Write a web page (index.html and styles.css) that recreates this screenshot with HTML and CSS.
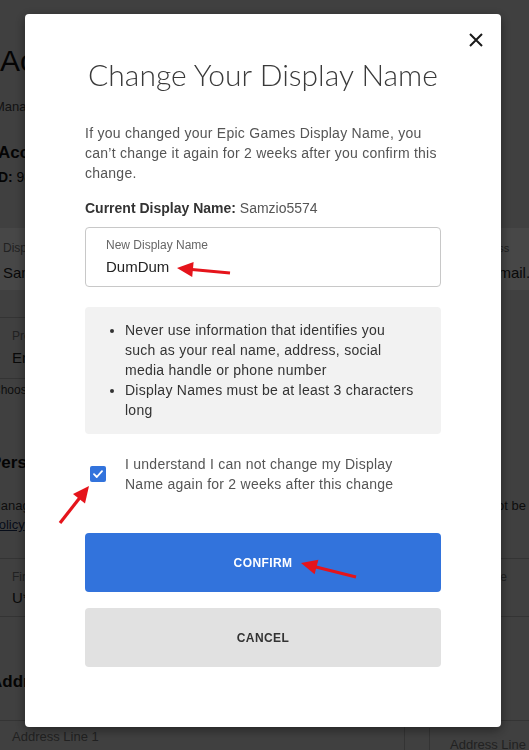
FILE: index.html
```html
<!DOCTYPE html>
<html lang="en">
<head>
    <meta charset="UTF-8">
    <meta name="viewport" content="width=device-width, initial-scale=1.0">
    <title>Account - Change Display Name</title>
    <link rel="stylesheet" href="styles.css">
</head>
<body>
    <div class="page">
        <h1 class="page-title">Account Settings</h1>
        <p class="page-sub">Manage your account’s details.</p>
        <h2 class="section-title">Account Info</h2>
        <p class="account-id"><b>ID:</b> 98f21c4e7a0b4d55</p>
        <div class="field-grid top">
            <div class="field">
                <span class="field-label">Display Name</span>
                <span class="field-value">Samzio5574</span>
            </div>
            <div class="field right">
                <span class="field-label">Email Address</span>
                <span class="field-value">samz@gmail.com</span>
            </div>
        </div>
        <div class="pref-row">
            <span class="field-label">Preferred Communication Language</span>
            <span class="field-value">English</span>
        </div>
        <p class="hint">Choose the language you want to receive messages in.</p>

        <h2 class="section-title personal">Personal Details</h2>
        <p class="page-text">Manage your name and contact info. These personal details are private to you and will not be displayed to other users. View our Privacy<br><a href="#">Policy</a> for more information.</p>
        <div class="field-grid lined">
            <div class="line-field">
                <span class="field-label">First Name</span>
                <span class="field-value">U*****</span>
            </div>
            <div class="line-field">
                <span class="field-label">Last Name</span>
                <span class="field-value">S*****</span>
            </div>
        </div>

        <h2 class="section-title address">Address</h2>
        <div class="field-grid boxed">
            <div class="box-field">
                <span class="field-label">Address Line 1</span>
            </div>
            <div class="box-field right">
                <span class="field-label">Address Line 2</span>
            </div>
        </div>
    </div>

    <div class="overlay">
        <div class="modal">
            <button class="modal-close" aria-label="Close">
                <svg width="14" height="14" viewBox="0 0 14 14"><path d="M1 1L13 13M13 1L1 13" stroke="#1a1a1a" stroke-width="2" fill="none"/></svg>
            </button>
            <h2 class="modal-title">Change Your Display Name</h2>
            <p class="modal-text">If you changed your Epic Games Display Name, you<br>can’t change it again for 2 weeks after you confirm this change.</p>
            <p class="current-name"><b>Current Display Name:</b> Samzio5574</p>
            <div class="name-input">
                <label for="newName">New Display Name</label>
                <input type="text" id="newName" value="DumDum">
            </div>
            <ul class="rules">
                <li>Never use information that identifies you such as your real name, address, social media handle or phone number</li>
                <li>Display Names must be at least 3 characters long</li>
            </ul>
            <label class="agree">
                <span class="checkbox">
                    <svg width="10" height="8" viewBox="0 0 10 8"><path d="M1 4.2L3.8 7L9 1.2" stroke="#fff" stroke-width="1.8" fill="none" stroke-linecap="round" stroke-linejoin="round"/></svg>
                </span>
                <span class="agree-text">I understand I can not change my Display Name again for 2 weeks after this change</span>
            </label>
            <button class="btn btn-confirm">CONFIRM</button>
            <button class="btn btn-cancel">CANCEL</button>
        </div>
    </div>

    <svg class="annotations" width="529" height="750" viewBox="0 0 529 750">
        <g fill="#e5141b" stroke="#e5141b">
            <line x1="230" y1="273" x2="192" y2="269.5" stroke-width="3.2"/>
            <polygon points="177,268 193.6,262 192.2,277" stroke="none"/>
            <line x1="60" y1="523" x2="80" y2="497.5" stroke-width="3.2"/>
            <polygon points="89,486 85,503.5 73,494" stroke="none"/>
            <line x1="356" y1="577" x2="316" y2="567" stroke-width="3.2"/>
            <polygon points="301,563 318.4,559.8 314.6,574.2" stroke="none"/>
        </g>
    </svg>
</body>
</html>
```

FILE: styles.css
```css
body {
    margin: 0;
    font-family: "Liberation Sans", Arial, sans-serif;
    background-color: #e6e6e6;
    color: #111;
    height: 100vh;
    overflow: hidden;
}
.page {
    margin-left: -10px;
    padding-top: 43px;
    width: 640px;
}
.page-title {
    font-size: 30px;
    line-height: 36px;
    font-weight: 400;
    margin: 0 0 0 10px;
}
.page-sub {
    font-size: 13px;
    line-height: 18px;
    color: #444;
    margin: 19px 0 0 4px;
}
.section-title {
    font-size: 17px;
    line-height: 22px;
    font-weight: 700;
    margin: 26px 0 0 8px;
}
.section-title.personal,
.section-title.address {
    margin: 54px 0 0 0;
}
.account-id {
    font-size: 14px;
    line-height: 20px;
    margin: 3px 0 0 4px;
}
.field-grid {
    display: grid;
    grid-template-columns: 415px 1fr;
    column-gap: 24px;
}
.field-grid.top {
    margin-top: 41px;
}
.field {
    background-color: #fff;
    padding: 12px 13px 7px;
}
.field.right {
    padding-left: 10px;
}
.field.right .field-label {
    font-size: 11px;
}
.field-label {
    display: block;
    font-size: 12px;
    line-height: 16px;
    color: #777;
}
.field-value {
    display: block;
    font-size: 15px;
    line-height: 20px;
    color: #222;
    margin-top: 7px;
}
.pref-row {
    width: 415px;
    box-sizing: border-box;
    margin-top: 27px;
    padding: 10px 20px 10px 22px;
    border-top: 1px solid #bbb;
    border-bottom: 1px solid #bbb;
}
.pref-row .field-value {
    margin-top: 4px;
}
.hint {
    font-size: 12px;
    line-height: 16px;
    color: #333;
    margin: 3px 0 0 2px;
}
.page-text {
    font-size: 13px;
    line-height: 19px;
    color: #333;
    margin: 22px 0 0;
    white-space: nowrap;
}
.page-text a {
    color: #1b2f5c;
}
.field-grid.lined {
    margin-top: 24px;
}
.line-field {
    padding: 10px 20px 8px 22px;
    border-top: 1px solid #bbb;
    border-bottom: 1px solid #bbb;
}
.line-field + .line-field {
    padding-left: 20px;
}
.line-field .field-value {
    margin-top: 3px;
}
.field-grid.boxed {
    margin-top: 27px;
    border-top: 1px solid #bbb;
    height: 60px;
}
.box-field {
    padding: 8px 18px 0 22px;
    border-right: 1px solid #bbb;
}
.box-field .field-label {
    font-size: 13px;
}
.box-field.right {
    border-right: none;
    border-left: 1px solid #bbb;
    margin-top: 7px;
    padding: 9px 18px 0 20px;
}

.overlay {
    position: fixed;
    inset: 0;
    background-color: rgba(0, 0, 0, 0.72);
}
.modal {
    position: relative;
    box-sizing: border-box;
    width: 476px;
    margin: 14px 0 0 25px;
    padding: 40px 60px 60px;
    background-color: #fff;
    border-radius: 4px;
    box-shadow: 0 3px 12px rgba(0, 0, 0, 0.45);
}
.modal-close {
    position: absolute;
    top: 16px;
    right: 15px;
    width: 20px;
    height: 20px;
    padding: 0;
    border: none;
    background: none;
    display: flex;
    align-items: center;
    justify-content: center;
}
.modal-title {
    font-family: Lato, "Liberation Sans", sans-serif;
    font-size: 30px;
    line-height: 40px;
    font-weight: 300;
    color: #3a3a3a;
    text-align: center;
    white-space: nowrap;
    margin: 0 0 29px;
}
.modal-text {
    font-size: 14px;
    line-height: 20px;
    letter-spacing: 0.25px;
    color: #555;
    margin: 0;
}
.current-name {
    font-size: 14px;
    line-height: 20px;
    color: #555;
    margin: 15px 0 0;
}
.current-name b {
    color: #333;
}
.name-input {
    margin-top: 9px;
    padding: 9px 20px;
    border: 1px solid #c8c8c8;
    border-radius: 4px;
}
.name-input label {
    display: block;
    font-size: 12px;
    line-height: 16px;
    color: #666;
}
.name-input input {
    display: block;
    width: 100%;
    height: 20px;
    margin-top: 4px;
    padding: 0;
    border: none;
    outline: none;
    background: transparent;
    font-family: inherit;
    font-size: 15px;
    line-height: 20px;
    color: #222;
}
.rules {
    margin: 20px 0 0;
    padding: 13px 26px 14px 40px;
    background-color: #f2f2f2;
    border-radius: 4px;
    font-size: 14px;
    line-height: 20px;
    letter-spacing: 0.25px;
    color: #333;
}
.agree {
    display: flex;
    align-items: center;
    margin-top: 20px;
}
.checkbox {
    flex: none;
    width: 16px;
    height: 16px;
    margin: 0 19px 0 5px;
    border-radius: 2px;
    background-color: #3273dc;
    display: flex;
    align-items: center;
    justify-content: center;
}
.agree-text {
    width: 290px;
    font-size: 14px;
    line-height: 20px;
    letter-spacing: 0.25px;
    color: #555;
}
.btn {
    display: block;
    width: 100%;
    height: 59px;
    border: none;
    border-radius: 4px;
    font-family: inherit;
    font-size: 12px;
    font-weight: 700;
    letter-spacing: 0.4px;
}
.btn-confirm {
    margin-top: 39px;
    background-color: #3273dc;
    color: #fff;
}
.btn-cancel {
    margin-top: 16px;
    background-color: #e1e1e1;
    color: #333;
}
.annotations {
    position: fixed;
    top: 0;
    left: 0;
    pointer-events: none;
}
```
